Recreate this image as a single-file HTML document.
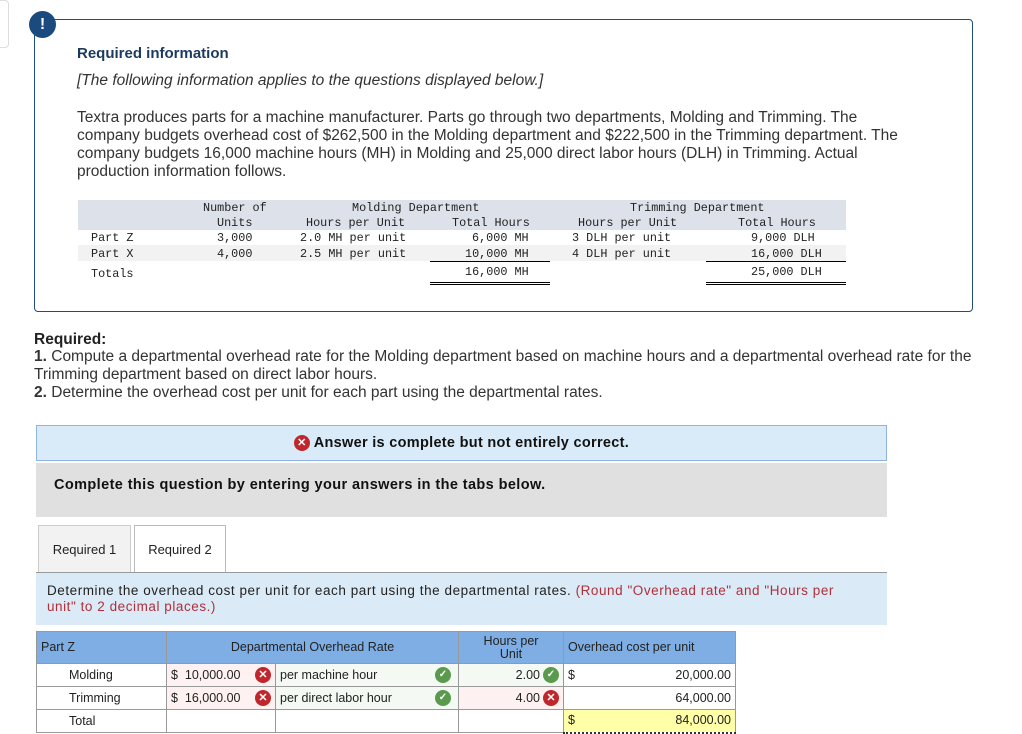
<!DOCTYPE html>
<html><head><meta charset="utf-8"><style>
*{margin:0;padding:0;box-sizing:border-box}
body{width:1022px;height:732px;background:#fff;position:relative;overflow:hidden;font-family:"Liberation Sans",Arial,sans-serif;color:#333}
.a{position:absolute;white-space:nowrap}
.p{font-size:15.5px;line-height:18px}
.m{font-family:"Liberation Mono",monospace;font-size:11.8px;color:#222;position:absolute;white-space:nowrap}
.x{display:inline-block;width:16px;height:16px;border-radius:50%;background:#c0272d;color:#fff;font-size:11px;font-weight:bold;text-align:center;line-height:16px;vertical-align:middle}
.c{display:inline-block;width:16px;height:16px;border-radius:50%;background:#5a9a4c;color:#fff;font-size:10px;font-weight:bold;text-align:center;line-height:16px;vertical-align:middle}
table{border-collapse:collapse;position:absolute;left:36px;top:631px;font-size:12.5px;color:#222;table-layout:fixed}
td{border:1px solid #999;height:23px;padding:0 4px;line-height:21px;white-space:nowrap;position:relative}
.ic{position:absolute;top:3px}
</style></head><body>
<div class="a" style="left:0;top:0;width:9px;height:48px;border:1px solid #ddd;border-left:none;border-radius:0 4px 4px 0"></div>
<div class="a" style="left:34px;top:19px;width:939px;height:293px;border:1px solid #1f4e79;border-radius:4px"></div>
<div class="a" style="left:29px;top:11px;width:27px;height:27px;border-radius:50%;background:#1b4a7e;color:#fff;font-weight:bold;font-size:16px;text-align:center;line-height:27px">!</div>
<div class="a" style="left:77px;top:45px;font-weight:bold;font-size:15px;color:#1c3a5e">Required information</div>
<div class="a p" style="left:77px;top:72px;font-style:italic">[The following information applies to the questions displayed below.]</div>
<div class="a p" style="left:77px;top:109px;white-space:normal;width:830px">Textra produces parts for a machine manufacturer. Parts go through two departments, Molding and Trimming. The company budgets overhead cost of $262,500 in the Molding department and $222,500 in the Trimming department. The company budgets 16,000 machine hours (MH) in Molding and 25,000 direct labor hours (DLH) in Trimming. Actual production information follows.</div>
<div class="a" style="left:78px;top:200px;width:768px;height:30px;background:#dde1ea"></div>
<div class="a" style="left:78px;top:245px;width:768px;height:16px;background:#f2f2f2"></div>
<div class="m" style="left:203px;top:201px">Number of</div>
<div class="m" style="left:217px;top:216px">Units</div>
<div class="m" style="left:352px;top:201px">Molding Department</div>
<div class="m" style="left:306px;top:216px">Hours per Unit</div>
<div class="m" style="left:452px;top:216px">Total Hours</div>
<div class="m" style="left:630px;top:201px">Trimming Department</div>
<div class="m" style="left:578px;top:216px">Hours per Unit</div>
<div class="m" style="left:738px;top:216px">Total Hours</div>
<div class="m" style="left:91px;top:231px">Part Z</div>
<div class="m" style="left:91px;top:247px">Part X</div>
<div class="m" style="left:91px;top:267px">Totals</div>
<div class="m" style="left:217px;top:231px">3,000</div>
<div class="m" style="left:217px;top:247px">4,000</div>
<div class="m" style="left:300px;top:231px">2.0 MH per unit</div>
<div class="m" style="left:300px;top:247px">2.5 MH per unit</div>
<div class="m" style="left:472px;top:231px">6,000 MH</div>
<div class="m" style="left:465px;top:247px">10,000 MH</div>
<div class="m" style="left:465px;top:265px">16,000 MH</div>
<div class="m" style="left:572px;top:231px">3 DLH per unit</div>
<div class="m" style="left:572px;top:247px">4 DLH per unit</div>
<div class="m" style="left:751px;top:231px">9,000 DLH</div>
<div class="m" style="left:751px;top:247px">16,000 DLH</div>
<div class="m" style="left:751px;top:265px">25,000 DLH</div>
<div class="a" style="left:430px;top:261px;width:120px;border-top:1px solid #000"></div>
<div class="a" style="left:430px;top:282px;width:120px;height:3px;border-top:1px solid #000;border-bottom:1px solid #000"></div>
<div class="a" style="left:706px;top:261px;width:140px;border-top:1px solid #000"></div>
<div class="a" style="left:706px;top:282px;width:140px;height:3px;border-top:1px solid #000;border-bottom:1px solid #000"></div>
<div class="a p" style="left:34px;top:331px;font-weight:bold;color:#222">Required:</div>
<div class="a p" style="left:34px;top:348px;white-space:normal;width:940px"><b>1.</b> Compute a departmental overhead rate for the Molding department based on machine hours and a departmental overhead rate for the Trimming department based on direct labor hours.</div>
<div class="a p" style="left:34px;top:384px"><b>2.</b> Determine the overhead cost per unit for each part using the departmental rates.</div>
<div class="a" style="left:36px;top:425px;width:851px;height:36px;background:#d9ebf8;border:1px solid #8db4e2;text-align:center;line-height:34px;font-weight:bold;font-size:14.5px;color:#111;letter-spacing:0.3px"><span class="x">✕</span> Answer is complete but not entirely correct.</div>
<div class="a" style="left:36px;top:463px;width:851px;height:54px;background:#e0e0e0"></div>
<div class="a" style="left:54px;top:477px;font-weight:bold;font-size:14.5px;color:#111;letter-spacing:0.4px">Complete this question by entering your answers in the tabs below.</div>
<div class="a" style="left:38px;top:525px;width:93px;height:48px;background:#f2f2f2;border:1px solid #ccc;border-bottom:none;text-align:center;line-height:48px;font-size:13px;color:#222">Required 1</div>
<div class="a" style="left:134px;top:525px;width:92px;height:48px;background:#fff;border:1px solid #bbb;border-bottom:none;text-align:center;line-height:48px;font-size:13px;color:#222">Required 2</div>
<div class="a" style="left:36px;top:572px;width:851px;height:53px;background:#daeaf7;border-top:1px solid #999"></div>
<div class="a" style="left:47px;top:583px;font-size:13.5px;line-height:16px;color:#222;white-space:normal;width:802px;letter-spacing:0.55px">Determine the overhead cost per unit for each part using the departmental rates. <span style="color:#b0303a">(Round "Overhead rate" and "Hours per unit" to 2 decimal places.)</span></div>
<table>
<colgroup><col style="width:130px"><col style="width:109px"><col style="width:183px"><col style="width:105px"><col style="width:172px"></colgroup>
<tr style="background:#7eaee3"><td style="height:32px">Part Z</td><td colspan="2" style="text-align:center">Departmental Overhead Rate</td><td style="text-align:center;line-height:13px">Hours per<br>Unit</td><td>Overhead cost per unit</td></tr>
<tr><td style="padding-left:32px">Molding</td><td style="background:#fdf1f1">$ &nbsp;10,000.00<span class="x ic" style="left:88px">✕</span></td><td style="background:#f4f9f4">per machine hour<span class="c ic" style="left:159px">✓</span></td><td style="text-align:right;background:#f4f9f4;padding-right:23px">2.00<span class="c ic" style="left:84px">✓</span></td><td>$<span style="float:right">20,000.00</span></td></tr>
<tr><td style="padding-left:32px">Trimming</td><td style="background:#fdf1f1">$ &nbsp;16,000.00<span class="x ic" style="left:88px">✕</span></td><td style="background:#f4f9f4">per direct labor hour<span class="c ic" style="left:159px">✓</span></td><td style="text-align:right;background:#fdf1f1;padding-right:23px">4.00<span class="x ic" style="left:84px">✕</span></td><td style="text-align:right">64,000.00</td></tr>
<tr><td style="padding-left:32px">Total</td><td></td><td></td><td></td><td style="background:#ffffa8;border-bottom:2px dotted #333">$<span style="float:right">84,000.00</span></td></tr>
</table>
</body></html>
